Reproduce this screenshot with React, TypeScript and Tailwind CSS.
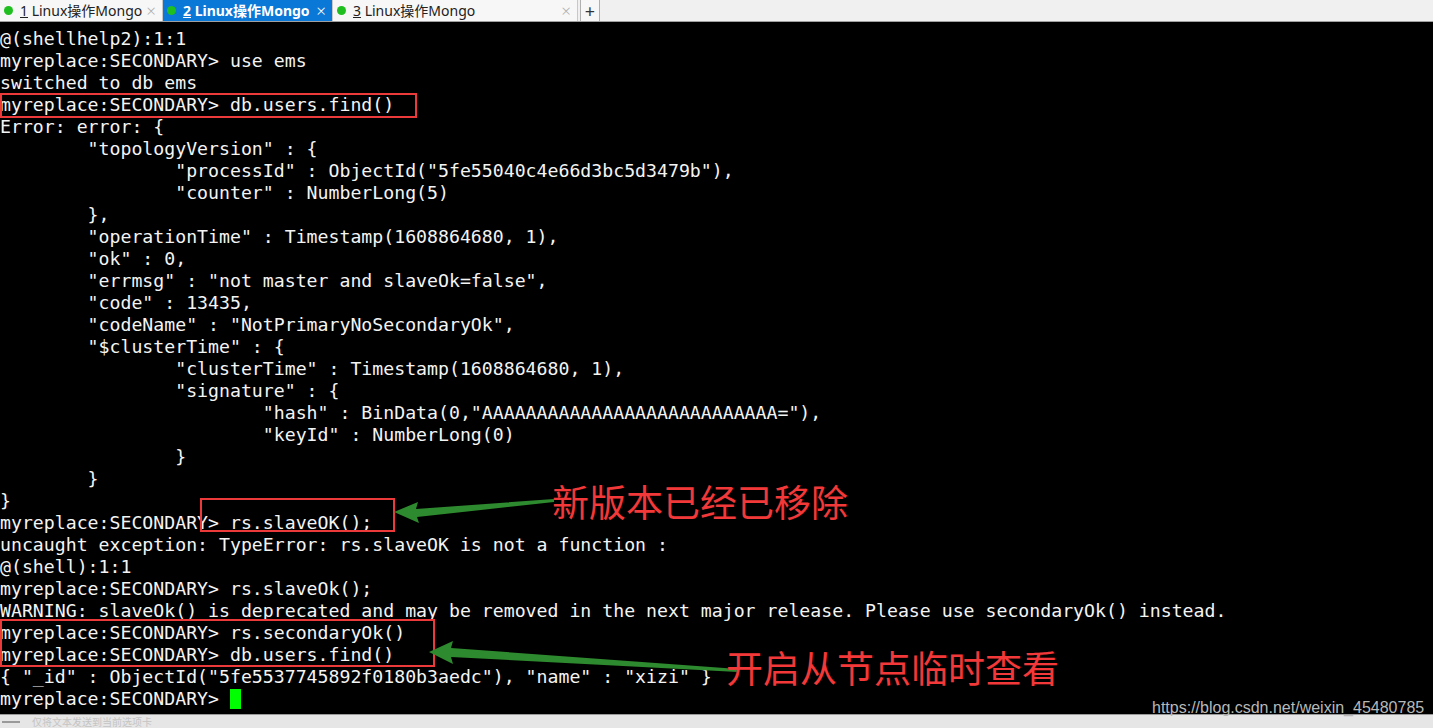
import React from 'react'

const tabs = [
  { num: '1', label: ' Linux操作Mongo', active: false, w: 'w-[163px]' },
  { num: '2', label: ' Linux操作Mongo', active: true, w: 'w-[170px]' },
  { num: '3', label: ' Linux操作Mongo', active: false, w: 'w-[245px]' },
]

const lines: string[] = [
  '@(shellhelp2):1:1',
  'myreplace:SECONDARY> use ems',
  'switched to db ems',
  'myreplace:SECONDARY> db.users.find()',
  'Error: error: {',
  '        "topologyVersion" : {',
  '                "processId" : ObjectId("5fe55040c4e66d3bc5d3479b"),',
  '                "counter" : NumberLong(5)',
  '        },',
  '        "operationTime" : Timestamp(1608864680, 1),',
  '        "ok" : 0,',
  '        "errmsg" : "not master and slaveOk=false",',
  '        "code" : 13435,',
  '        "codeName" : "NotPrimaryNoSecondaryOk",',
  '        "$clusterTime" : {',
  '                "clusterTime" : Timestamp(1608864680, 1),',
  '                "signature" : {',
  '                        "hash" : BinData(0,"AAAAAAAAAAAAAAAAAAAAAAAAAAA="),',
  '                        "keyId" : NumberLong(0)',
  '                }',
  '        }',
  '}',
  'myreplace:SECONDARY> rs.slaveOK();',
  'uncaught exception: TypeError: rs.slaveOK is not a function :',
  '@(shell):1:1',
  'myreplace:SECONDARY> rs.slaveOk();',
  'WARNING: slaveOk() is deprecated and may be removed in the next major release. Please use secondaryOk() instead.',
  'myreplace:SECONDARY> rs.secondaryOk()',
  'myreplace:SECONDARY> db.users.find()',
  '{ "_id" : ObjectId("5fe5537745892f0180b3aedc"), "name" : "xizi" }',
]

const TabBar = () => (
  <div className="h-[22px] flex bg-[#f0f0f0] border-b border-[#a0a0a0] font-['Noto_Sans','Noto_Sans_CJK_SC',sans-serif] text-[14px] leading-[21px]">
    {tabs.map((t) => (
      <div
        key={t.num}
        className={`${t.w} flex items-center pl-[4px] pr-[6px] border-r border-[#c8c8c8] ${
          t.active ? 'bg-[#0a78d6] text-white font-bold' : 'bg-[#f7f7f7] text-[#222]'
        }`}
      >
        <span className="w-[9px] h-[9px] rounded-full bg-[#1fbf1f] mr-[7px] shrink-0" />
        <span className="whitespace-nowrap">
          <span className="underline">{t.num}</span>
          {t.label}
        </span>
        <span className={`ml-auto text-[17px] leading-[21px] font-light ${t.active ? 'text-white' : 'text-[#b0b0b0]'}`}>×</span>
      </div>
    ))}
    <div className="w-[20px] h-[21px] ml-[2px] flex items-center justify-center border-x border-[#b0b0b0] bg-[#f7f7f7] text-[#333] text-[18px] leading-[20px]">
      +
    </div>
  </div>
)

const Box = ({ cls }: { cls: string }) => (
  <div className={`absolute border-2 border-[#ec3a3a] ${cls}`} />
)

export default function App() {
  return (
    <div className="relative w-[1433px] h-[728px] bg-black overflow-hidden">
      <TabBar />

      {/* terminal */}
      <div className="h-[692px] pt-[6px] font-['DejaVu_Sans_Mono',monospace] text-[18.2px] text-[#f4f4f4]">
        {lines.map((l, i) => (
          <div key={i} className="h-[22px] leading-[22px] whitespace-pre">
            {l}
          </div>
        ))}
        <div className="h-[22px] leading-[22px] whitespace-pre flex items-center">
          <span>myreplace:SECONDARY&gt; </span>
          <span className="w-[11px] h-[20px] bg-[#00ff00]" />
        </div>
      </div>

      {/* compose bar */}
      <div className="h-[14px] bg-[#e6e6e6] border-t border-[#9a9a9a] flex items-center pl-[2px] overflow-hidden">
        <span className="w-[18px] h-[2px] bg-[#9a9a9a]" />
        <span className="ml-[12px] text-[10px] leading-[12px] text-[#c4c4c4] font-['Noto_Sans_CJK_SC',sans-serif]">
          仅将文本发送到当前选项卡
        </span>
      </div>

      {/* annotations */}
      <Box cls="left-0 top-[93px] w-[417px] h-[25px]" />
      <Box cls="left-[200px] top-[498px] w-[195px] h-[34px]" />
      <Box cls="left-0 top-[619px] w-[435px] h-[48px]" />

      <svg className="absolute left-0 top-0" width="1433" height="728">
        <polygon points="394,512 418,502 416,509 554,499 554,502 417,517 419,523" fill="#2e8a2e" />
        <polygon points="429,652 453,641 451,648 738,669 738,672 451,657 453,664" fill="#2e8a2e" />
      </svg>

      <div className="absolute left-[552px] top-[479px] text-[37px] leading-[44px] text-[#f23838] font-['Noto_Sans_CJK_SC',sans-serif] whitespace-nowrap">
        新版本已经已移除
      </div>
      <div className="absolute left-[726px] top-[645px] text-[37px] leading-[44px] text-[#f23838] font-['Noto_Sans_CJK_SC',sans-serif] whitespace-nowrap">
        开启从节点临时查看
      </div>

      <div className="absolute left-[1152px] top-[698px] text-[16px] leading-[20px] text-[#b8b8b8] font-['Liberation_Sans',sans-serif] whitespace-nowrap">
        https://blog.csdn.net/weixin_45480785
      </div>
    </div>
  )
}
